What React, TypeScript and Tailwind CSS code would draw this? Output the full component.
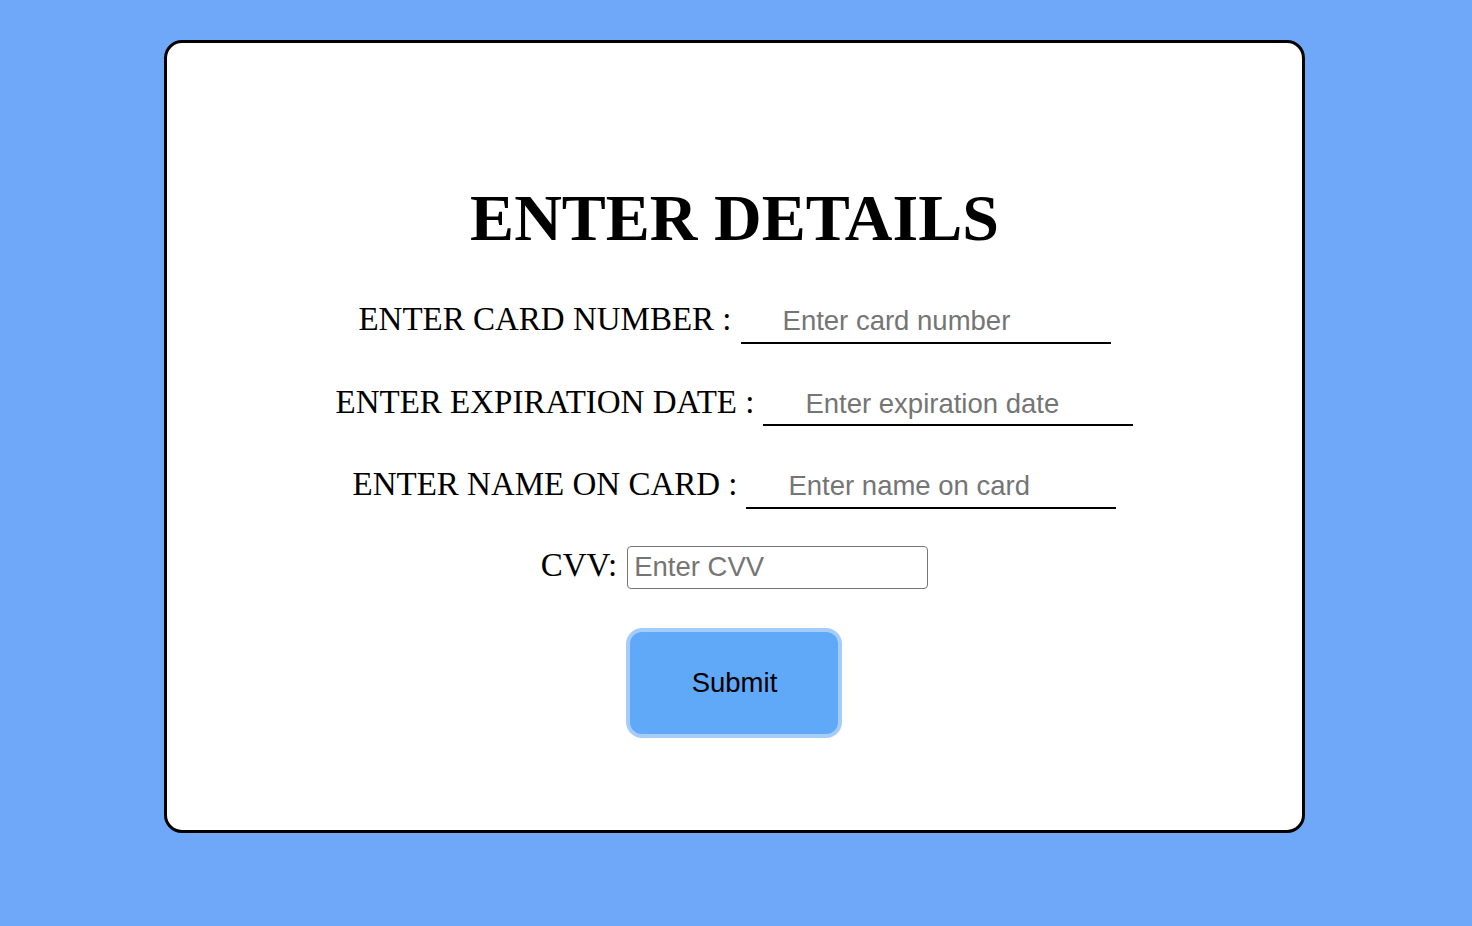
import React from "react";

const fields = [
  { label: "ENTER CARD NUMBER :", placeholder: "Enter card number" },
  { label: "ENTER EXPIRATION DATE :", placeholder: "Enter expiration date" },
  { label: "ENTER NAME ON CARD :", placeholder: "Enter name on card" },
];

export default function App() {
  return (
    <div className="min-h-[926px] w-full bg-[#70a8f9] pt-[40px] font-['Liberation_Serif',serif]">
      <div className="ml-[164px] flex h-[793px] w-[1141px] flex-col items-center rounded-[18px] border-[3px] border-black bg-white pt-[142px]">
        <h1 className="text-[66px] font-bold leading-none text-black">
          ENTER DETAILS
        </h1>

        <form
          className="mt-[52px] flex flex-col items-center"
          onSubmit={(e) => e.preventDefault()}
        >
          {fields.map((field, i) => (
            <div
              key={field.label}
              className={
                i === 0
                  ? "flex items-baseline gap-[9px]"
                  : "mt-[42px] flex items-baseline gap-[9px]"
              }
            >
              <label className="text-[33px] leading-none text-black">
                {field.label}
              </label>
              <input
                type="text"
                placeholder={field.placeholder}
                className="h-[40px] w-[370px] border-b-2 border-black pb-[4px] pl-[42px] font-['Liberation_Sans',Arial,sans-serif] text-[27.5px] text-black outline-none placeholder:text-[#757575]"
              />
            </div>
          ))}

          <div className="mt-[37px] flex items-baseline gap-[10px]">
            <label className="text-[33px] leading-none text-black">CVV:</label>
            <input
              type="text"
              placeholder="Enter CVV"
              className="h-[43px] w-[301px] rounded-[4px] border-[1.5px] border-[#767676] px-[6px] font-['Liberation_Sans',Arial,sans-serif] text-[27.5px] text-black outline-none placeholder:text-[#757575]"
            />
          </div>

          <button
            type="submit"
            className="mt-[39px] h-[110px] w-[216px] rounded-[16px] border-4 border-[#a5cdfb] bg-[#60a8f8] font-['Liberation_Sans',Arial,sans-serif] text-[27.5px] text-black"
          >
            Submit
          </button>
        </form>
      </div>
    </div>
  );
}
